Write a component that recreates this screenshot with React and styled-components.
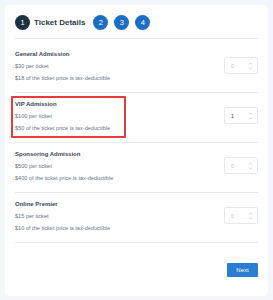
import React from "react";
import styled, { createGlobalStyle } from "styled-components";

const GlobalStyle = createGlobalStyle`
  body {
    margin: 0;
    background: #f3f6fa;
    font-family: "Liberation Sans", Arial, sans-serif;
  }
`;

const Page = styled.div`
  padding: 5px;
`;

const Card = styled.div`
  background: #ffffff;
  border-radius: 3px;
  padding: 10px 10px 19px;
  box-shadow: 0 0 1px rgba(30, 50, 80, 0.06);
`;

const Steps = styled.div`
  display: flex;
  align-items: center;
  padding: 0 0 8px;
  border-bottom: 1px solid #e4e9ef;
`;

const Step = styled.div`
  width: 15px;
  height: 15px;
  border-radius: 50%;
  background: ${(p) => (p.active ? "#1c3142" : "#1b6ec4")};
  color: #ffffff;
  font-size: 7.5px;
  display: flex;
  align-items: center;
  justify-content: center;
  margin-right: ${(p) => (p.active ? "4px" : "6px")};
`;

const StepLabel = styled.div`
  font-size: 8px;
  font-weight: bold;
  color: #2b3a48;
  margin-right: 8px;
`;

const List = styled.div`
  padding-top: 4px;
`;

const Row = styled.div`
  display: flex;
  justify-content: space-between;
  align-items: flex-start;
  padding: 3px 0 4px;
  border-bottom: 1px solid #e4e9ef;
`;

const Info = styled.div`
  margin-left: -4px;
  padding: 0 2px 2px;
  width: 107px;
  border: 2px solid ${(p) => (p.selected ? "#ea3b3b" : "transparent")};
  border-radius: 1px;
`;

const Title = styled.div`
  font-size: 6px;
  font-weight: bold;
  color: #3a4755;
  line-height: 12px;
`;

const Detail = styled.div`
  font-size: 5.6px;
  color: #6b7683;
  line-height: 12px;
  white-space: nowrap;
`;

const Qty = styled.div`
  margin-top: 11px;
  width: 34px;
  height: 17px;
  box-sizing: border-box;
  border: 1px solid #e4e9ef;
  border-radius: 2px;
  display: flex;
  align-items: center;
  justify-content: space-between;
  padding: 0 4px 0 6px;
  font-size: 5.4px;
  color: ${(p) => (p.filled ? "#3a4755" : "#b9c1ca")};
`;

const Arrows = styled.svg`
  width: 5px;
  height: 10px;
`;

const Footer = styled.div`
  display: flex;
  justify-content: flex-end;
  padding-top: 20px;
`;

const NextButton = styled.button`
  width: 31px;
  height: 14px;
  border: none;
  border-radius: 1px;
  background: #2b7dd2;
  color: #ffffff;
  font-family: "Liberation Sans", Arial, sans-serif;
  font-size: 6px;
  padding: 0;
`;

const tickets = [
  { name: "General Admission", price: "$30 per ticket", deduct: "$18 of the ticket price is tax-deductible", qty: 0 },
  { name: "VIP Admission", price: "$100 per ticket", deduct: "$50 of the ticket price is tax-deductible", qty: 1, selected: true },
  { name: "Sponsoring Admission", price: "$500 per ticket", deduct: "$400 of the ticket price is tax-deductible", qty: 0 },
  { name: "Online Premier", price: "$15 per ticket", deduct: "$10 of the ticket price is tax-deductible", qty: 0 },
];

const Spinner = () => (
  <Arrows viewBox="0 0 5 10">
    <path d="M1 3.5 L2.5 2 L4 3.5 M1 6.5 L2.5 8 L4 6.5" stroke="#b9c1ca" strokeWidth="0.7" fill="none" />
  </Arrows>
);

export default function App() {
  return (
    <Page>
      <GlobalStyle />
      <Card>
        <Steps>
          <Step active>1</Step>
          <StepLabel>Ticket Details</StepLabel>
          <Step>2</Step>
          <Step>3</Step>
          <Step>4</Step>
        </Steps>
        <List>
          {tickets.map((t) => (
            <Row key={t.name}>
              <Info selected={t.selected}>
                <Title>{t.name}</Title>
                <Detail>{t.price}</Detail>
                <Detail>{t.deduct}</Detail>
              </Info>
              <Qty filled={t.qty > 0}>
                <span>{t.qty}</span>
                <Spinner />
              </Qty>
            </Row>
          ))}
        </List>
        <Footer>
          <NextButton>Next</NextButton>
        </Footer>
      </Card>
    </Page>
  );
}
